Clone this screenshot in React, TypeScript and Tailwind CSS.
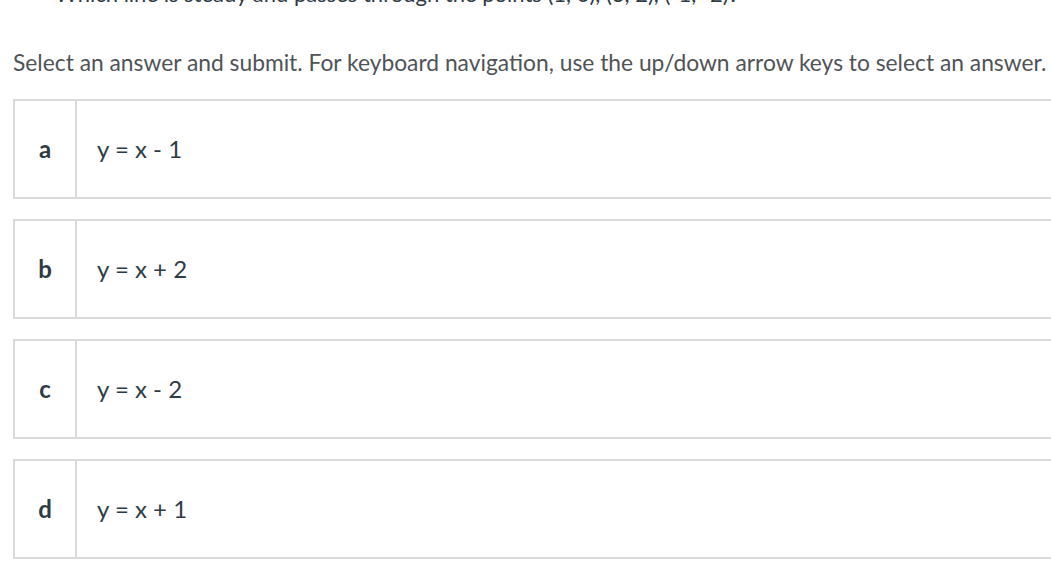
import React from "react";

const answers = [
  { k: "a", t: "y = x - 1" },
  { k: "b", t: "y = x + 2" },
  { k: "c", t: "y = x - 2" },
  { k: "d", t: "y = x + 1" },
];

export default function App() {
  return (
    <div
      className="w-[1051px] h-[567px] overflow-hidden bg-white"
      style={{ fontFamily: "Lato, 'Open Sans', sans-serif" }}
    >
      <div className="-mt-[19px] pl-[55px] h-[26px] text-[22px] leading-[26px] text-[#2d3b45] whitespace-nowrap">
        Which line is steady and passes through the points (1, 0), (3, 2), (-1, -2)?
      </div>
      <div className="pl-[13px] pt-[41px] text-[22.8px] leading-[28px] text-[#4f5357] whitespace-nowrap">
        Select an answer and submit. For keyboard navigation, use the up/down arrow keys to select an answer.
      </div>
      <div className="pl-[13px] pt-[23px] flex flex-col gap-[20px]">
        {answers.map((a) => (
          <div
            key={a.k}
            className="w-[1060px] h-[100px] border-2 border-[#dadada] flex shrink-0"
          >
            <div className="w-[62px] border-r-2 border-[#dadada] flex items-center justify-center text-[24px] text-[#2d3b45] font-bold">
              {a.k}
            </div>
            <div className="flex items-center pl-[20px] text-[24px] text-[#2d3b45]">
              {a.t}
            </div>
          </div>
        ))}
      </div>
    </div>
  );
}
